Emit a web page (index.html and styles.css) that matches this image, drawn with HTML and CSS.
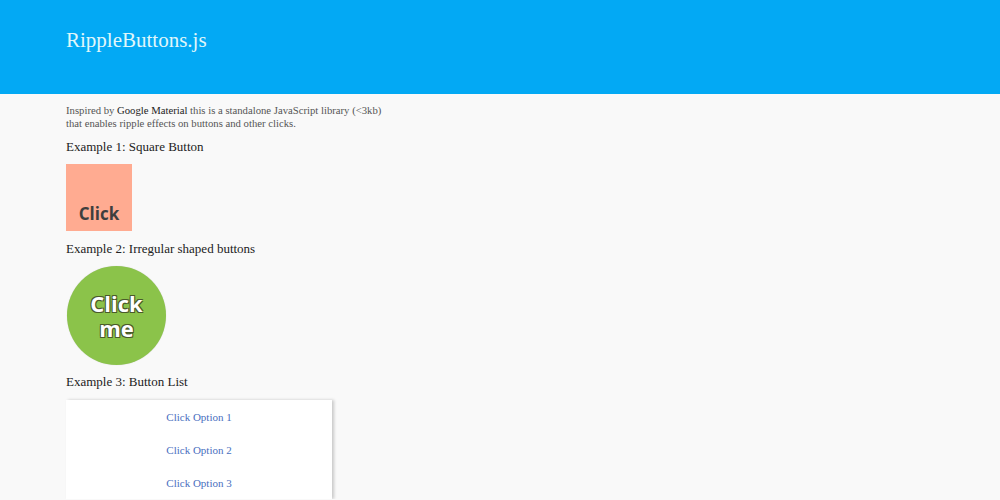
FILE: index.html
```html
<!DOCTYPE html>
<html>
<head>
<meta charset="utf-8">
<link rel="stylesheet" href="styles.css">
</head>
<body>
<header class="header">
  <h1 class="title">RippleButtons.js</h1>
</header>
<main class="content">
  <p class="intro">Inspired by <a class="link" href="#">Google Material</a> this is a standalone JavaScript library (&lt;3kb)<br>that enables ripple effects on buttons and other clicks.</p>
  <h2 class="label">Example 1: Square Button</h2>
  <div class="square"><span>Click</span></div>
  <h2 class="label label-2">Example 2: Irregular shaped buttons</h2>
  <div class="circle"><span>Click<br>me</span></div>
  <h2 class="label">Example 3: Button List</h2>
  <ul class="list">
    <li class="item">Click Option 1</li>
    <li class="item">Click Option 2</li>
    <li class="item">Click Option 3</li>
  </ul>
</main>
</body>
</html>
```
FILE: styles.css
```css
html, body {
  margin: 0;
  padding: 0;
  background: #f9f9f9;
  font-family: "Liberation Serif", "Times New Roman", serif;
  overflow: hidden;
}
.header {
  background: #03a9f4;
  height: 94px;
  padding: 0 66px;
  box-sizing: border-box;
  display: flex;
  align-items: flex-start;
}
.title {
  margin: 28px 0 0 0;
  font-weight: normal;
  font-size: 21px;
  line-height: 24px;
  color: #e0f7fa;
}
.content {
  padding: 0 66px;
}
.intro {
  margin: 10px 0 0 0;
  font-size: 10.7px;
  line-height: 13px;
  color: #555;
}
.link {
  color: #222;
  text-decoration: none;
}
.label {
  margin: 9px 0 9px 0;
  font-weight: normal;
  font-size: 13px;
  line-height: 16px;
  color: #222;
}
.label-2 {
  margin-top: 10px;
}
.square {
  width: 66px;
  height: 67px;
  background: #ffab91;
  display: flex;
  align-items: flex-end;
  justify-content: center;
  box-sizing: border-box;
  padding-bottom: 7px;
}
.square span {
  font-family: "Open Sans", "DejaVu Sans", sans-serif;
  font-weight: bold;
  font-size: 17px;
  line-height: 20px;
  color: #3e3e3e;
}
.circle {
  width: 99px;
  height: 99px;
  margin-left: 1px;
  border-radius: 50%;
  background: #8bc34a;
  display: flex;
  align-items: center;
  justify-content: center;
  box-sizing: border-box;
  padding-top: 1px;
  box-shadow: 0 0 1px rgba(0,0,0,0.2);
}
.circle span {
  font-family: "Open Sans", "DejaVu Sans", sans-serif;
  font-weight: bold;
  font-size: 22px;
  line-height: 25px;
  text-align: center;
  color: #fff;
  text-shadow: 1px 1px 0 #4a5a2a, -1px -1px 0 #4a5a2a, 1px -1px 0 #4a5a2a, -1px 1px 0 #4a5a2a;
}
.list {
  list-style: none;
  margin: 10px 0 0 0;
  padding: 0;
  width: 266px;
  background: #fff;
  box-shadow: 2px 0 3px rgba(0,0,0,0.2);
}
.item {
  height: 33px;
  display: flex;
  align-items: center;
  justify-content: center;
  font-size: 11px;
  color: #4a6fc0;
}
```
